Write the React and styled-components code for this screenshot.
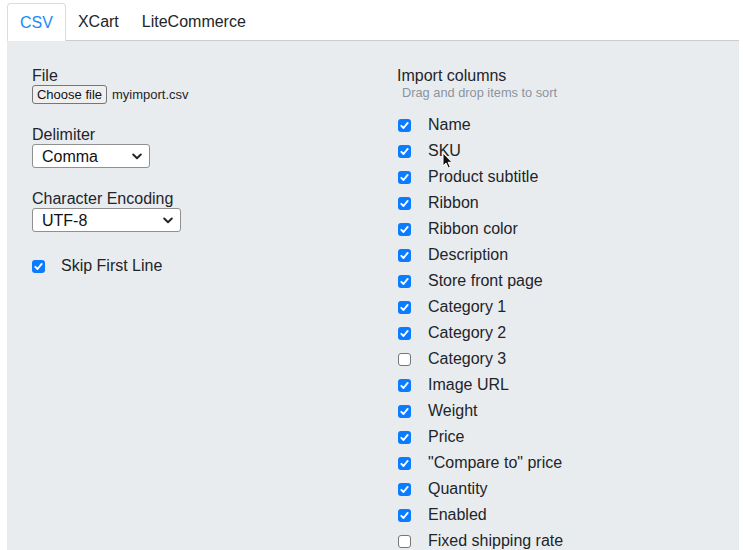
import React from "react";
import styled, { createGlobalStyle } from "styled-components";

const Global = createGlobalStyle`
  html, body { margin: 0; padding: 0; background: #fff; }
  body { font-family: "Liberation Sans", Arial, sans-serif; color: #212529; }
`;

const Page = styled.div`
  padding: 3px 4px 0 7px;
  position: relative;
`;

const Tabs = styled.div`
  display: flex;
  height: 37px;
`;

const Tab = styled.div`
  display: flex;
  align-items: center;
  padding: ${(p) => (p.$active ? "0 12px 0 12px" : "0 10px 0 11px")};
  font-size: 16px;
  color: ${(p) => (p.$active ? "#1a8cf5" : "#212529")};
  background: ${(p) => (p.$active ? "#fff" : "transparent")};
  border: 1px solid ${(p) => (p.$active ? "#d8dde2" : "transparent")};
  border-bottom: none;
  border-radius: 4px 4px 0 0;
  box-sizing: border-box;
  margin-bottom: ${(p) => (p.$active ? "-1px" : "0")};
  position: relative;
  z-index: 1;
`;

const Panel = styled.div`
  background: #e9ecef;
  border-top: 1px solid #c6ced4;
  min-height: 520px;
  padding: 25px 25px 0 25px;
  display: grid;
  grid-template-columns: 365px 1fr;
`;

const Column = styled.div`
  display: flex;
  flex-direction: column;
`;

const Group = styled.div`
  display: flex;
  flex-direction: column;
  align-items: flex-start;
  margin-bottom: 21px;
`;

const Label = styled.div`
  font-size: 16px;
  line-height: 19px;
`;

const FileRow = styled.div`
  display: flex;
  align-items: center;
  gap: 5px;
  font-size: 13px;
`;

const FileButton = styled.button`
  height: 19px;
  width: 75px;
  padding: 0;
  font-family: "Liberation Sans", Arial, sans-serif;
  font-size: 13px;
  color: #111;
  background: #efefef;
  border: 1px solid #767676;
  border-radius: 3px;
  box-sizing: border-box;
`;

const chevron =
  "url(\"data:image/svg+xml;utf8,<svg xmlns='http://www.w3.org/2000/svg' width='10' height='7' viewBox='0 0 10 7'><path d='M1.2 1.5 L5 5.2 L8.8 1.5' fill='none' stroke='%23222' stroke-width='1.9' stroke-linecap='round' stroke-linejoin='round'/></svg>\")";

const Select = styled.select`
  appearance: none;
  -webkit-appearance: none;
  width: ${(p) => p.$width}px;
  height: 24px;
  padding: 0 0 0 9px;
  font-family: "Liberation Sans", Arial, sans-serif;
  font-size: 16px;
  color: #111;
  background: #fff ${chevron} no-repeat right 7px center;
  border: 1px solid #8f8f8f;
  border-radius: 3px;
  box-sizing: border-box;
  outline: none;
`;

const check =
  "url(\"data:image/svg+xml;utf8,<svg xmlns='http://www.w3.org/2000/svg' width='13' height='13' viewBox='0 0 13 13'><path d='M3.3 6.8 L5.5 9 L9.7 3.9' fill='none' stroke='white' stroke-width='1.9' stroke-linecap='round' stroke-linejoin='round'/></svg>\")";

const Box = styled.input.attrs({ type: "checkbox" })`
  appearance: none;
  -webkit-appearance: none;
  margin: 0;
  width: 13px;
  height: 13px;
  flex: none;
  box-sizing: border-box;
  border-radius: 3px;
  border: 1px solid #767676;
  background: #fff;
  &:checked {
    border: none;
    background: #0b7cff ${check} no-repeat center;
  }
`;

const CheckRow = styled.label`
  display: flex;
  align-items: center;
  height: 26px;
  gap: 17px;
  font-size: 16px;
  padding-left: ${(p) => (p.$inset ? 1 : 0)}px;
`;

const SkipRow = styled(CheckRow)`
  height: 24px;
  gap: 16px;
  margin-top: 1px;
`;

const Hint = styled.div`
  font-size: 12.8px;
  line-height: 15px;
  color: #8a949e;
  padding-left: 5px;
  margin-bottom: 12px;
`;

const Cursor = styled.svg`
  position: absolute;
  left: 442px;
  top: 152px;
  width: 11px;
  height: 17px;
`;

const columns = [
  ["Name", true],
  ["SKU", true],
  ["Product subtitle", true],
  ["Ribbon", true],
  ["Ribbon color", true],
  ["Description", true],
  ["Store front page", true],
  ["Category 1", true],
  ["Category 2", true],
  ["Category 3", false],
  ["Image URL", true],
  ["Weight", true],
  ["Price", true],
  ['"Compare to" price', true],
  ["Quantity", true],
  ["Enabled", true],
  ["Fixed shipping rate", false],
];

export default function App() {
  return (
    <>
      <Global />
      <Page>
        <Tabs>
          <Tab $active>CSV</Tab>
          <Tab>XCart</Tab>
          <Tab>LiteCommerce</Tab>
        </Tabs>
        <Panel>
          <Column>
            <Group>
              <Label>File</Label>
              <FileRow>
                <FileButton>Choose file</FileButton>
                <span>myimport.csv</span>
              </FileRow>
            </Group>
            <Group>
              <Label>Delimiter</Label>
              <Select $width={118} defaultValue="comma">
                <option value="comma">Comma</option>
                <option value="semicolon">Semicolon</option>
                <option value="tab">Tab</option>
              </Select>
            </Group>
            <Group>
              <Label>Character Encoding</Label>
              <Select $width={149} defaultValue="utf8">
                <option value="utf8">UTF-8</option>
                <option value="latin1">ISO-8859-1</option>
              </Select>
            </Group>
            <SkipRow>
              <Box defaultChecked />
              <span>Skip First Line</span>
            </SkipRow>
          </Column>
          <Column>
            <Label>Import columns</Label>
            <Hint>Drag and drop items to sort</Hint>
            {columns.map(([name, on]) => (
              <CheckRow key={name} $inset>
                <Box defaultChecked={on} />
                <span>{name}</span>
              </CheckRow>
            ))}
          </Column>
        </Panel>
        <Cursor viewBox="0 0 11 17">
          <path
            d="M1 1 L1 14 L4 11 L6.3 16 L8.3 15.1 L6.1 10.3 L10 10.3 Z"
            fill="#111"
            stroke="#fff"
            strokeWidth="1"
            strokeLinejoin="round"
          />
        </Cursor>
      </Page>
    </>
  );
}
